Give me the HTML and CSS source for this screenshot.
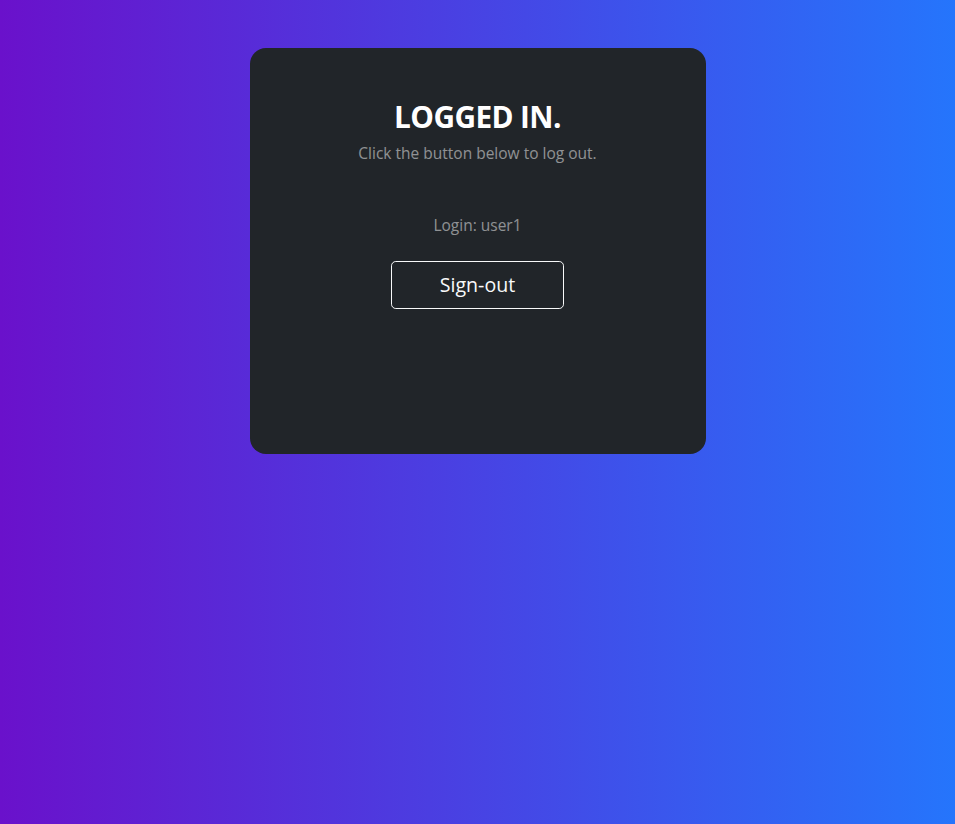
FILE: index.html
```html
<!DOCTYPE html>
<html lang="en">
<head>
<meta charset="utf-8">
<title>Logged in</title>
<link rel="stylesheet" href="styles.css">
</head>
<body>
<section class="page">
  <div class="container">
    <div class="column">
      <div class="card">
        <div class="card-body">
          <h2 class="title">Logged in.</h2>
          <p class="muted subtitle">Click the button below to log out.</p>
          <p class="muted login">Login: user1</p>
          <button class="btn-outline" type="button">Sign-out</button>
        </div>
      </div>
    </div>
  </div>
</section>
</body>
</html>
```

FILE: styles.css
```css
* { box-sizing: border-box; }
html, body { margin: 0; height: 100%; }
body {
  font-family: "Open Sans", "Noto Sans", "Liberation Sans", sans-serif;
  font-size: 16px;
  line-height: 1.5;
  color: #fff;
  background: linear-gradient(to right, #6a11cb, #2575fc);
}
.page { padding: 48px 0; }
.container {
  width: 720px;
  margin: 0 auto;
  display: flex;
  justify-content: center;
}
.column { width: 456px; }
.card {
  background: #212529;
  border-radius: 16px;
}
.card-body {
  padding: 48px 48px 145px;
  text-align: center;
}
.title {
  margin: 3px 0 6px;
  font-size: 29.8px;
  line-height: 1.2;
  font-weight: 700;
  text-transform: uppercase;
  letter-spacing: -0.6px;
}
.muted { color: rgba(255,255,255,0.5); margin: 0; font-size: 15.5px; line-height: 24px; }
.subtitle { margin-bottom: 48px; }
.login { margin-bottom: 24px; }
.btn-outline {
  font-family: inherit;
  display: inline-block;
  background: transparent;
  color: #f8f9fa;
  border: 1px solid #f8f9fa;
  border-radius: 4.8px;
  padding: 8px 48px;
  font-size: 19.6px;
  line-height: 30px;
  height: 48px;
  cursor: pointer;
}
```
